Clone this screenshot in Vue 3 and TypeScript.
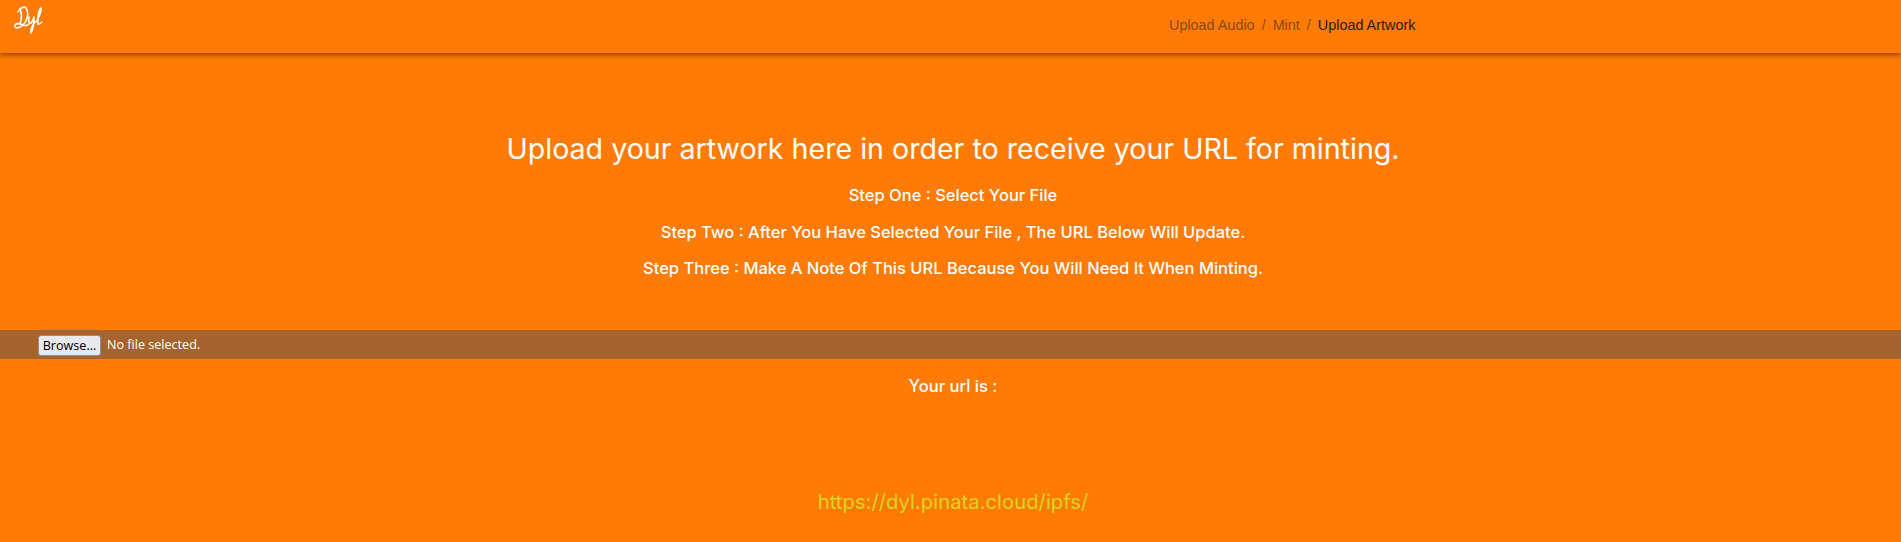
<script setup lang="ts">
const crumbs: string[] = ['Upload Audio', 'Mint']
const steps: string[] = [
  'Step One : Select Your File',
  'Step Two : After You Have Selected Your File , The URL Below Will Update.',
  'Step Three : Make A Note Of This URL Because You Will Need It When Minting.',
]
</script>

<template>
  <div class="page">
    <header class="nav">
      <svg class="logo" viewBox="0 0 30 30" fill="none" stroke="#fff" stroke-width="1.6" stroke-linecap="round" stroke-linejoin="round">
        <path d="M4 6C6 2 10 0 12 2C15 6 14 14 9 19C6 22 1 23 0.8 20C1 17 6 17 9 19C11 20 13 20 15 18" />
        <path d="M6 3C8 7 8 12 6 18" />
        <path d="M15 11C14 15 15 18 17 17C19 15 19 13 20 11C20 16 19 23 17 27C16 24 18 20 21 16" />
        <path d="M22 16C25 12 28 3 27 2C25 3 23 12 24 18C25 19 27 17 28 16" />
      </svg>
      <nav class="crumbs">
        <template v-for="c in crumbs" :key="c">
          <a class="crumb">{{ c }}</a>
          <span class="sep">/</span>
        </template>
        <span class="current">Upload Artwork</span>
      </nav>
    </header>
    <section class="intro">
      <h1 class="title">Upload your artwork here in order to receive your URL for minting.</h1>
      <p v-for="s in steps" :key="s" class="step">{{ s }}</p>
    </section>
    <div class="strip">
      <button class="browse" type="button">Browse...</button>
      <span class="nofile">No file selected.</span>
    </div>
    <p class="your">Your url is :</p>
    <p class="url">https://dyl.pinata.cloud/ipfs/</p>
  </div>
</template>

<style>
html, body { margin: 0; background: #ff7b06; }
</style>

<style scoped>
.page {
  height: 542px;
  overflow: hidden;
  background: #ff7b06;
  color: #fff;
  font-family: Inter, "Noto Sans", sans-serif;
  text-align: center;
}
.nav {
  height: 53px;
  display: flex;
  box-shadow: 0 2px 5px rgba(90, 40, 0, 0.65);
  position: relative;
}
.logo {
  width: 30px;
  height: 30px;
  margin: 6px 0 0 14px;
}
.crumbs {
  display: flex;
  align-items: center;
  margin-left: 1125px;
  height: 50px;
  font: 14.4px "Liberation Sans", Arial, sans-serif;
}
.crumb { color: #8a4a10; }
.sep { color: #8a4a10; padding: 0 7px; }
.current { color: #2a1a0c; }
.intro { padding: 79px 0 0 5px; height: 198px; }
.title {
  margin: 0 0 19px;
  font-size: 28.6px;
  font-weight: 400;
  line-height: 34px;
}
.step {
  margin: 0 0 16px;
  font-size: 16.5px;
  font-weight: 500;
  line-height: 20.5px;
}
.strip {
  height: 29px;
  background: #a5642e;
  display: flex;
  align-items: center;
  padding-left: 38px;
}
.browse {
  width: 63px;
  height: 21px;
  margin-top: 1px;
  padding: 0;
  border: 1px solid #8f8f9d;
  border-radius: 3px;
  background: #e9e9ed;
  color: #000;
  font: 12.6px "Open Sans", sans-serif;
}
.nofile { margin-left: 6px; font: 12.6px "Open Sans", sans-serif; }
.your {
  margin: 17px 0 0;
  padding-left: 5px;
  font-size: 16.6px;
  font-weight: 500;
  line-height: 20px;
}
.url {
  margin: 94px 0 0;
  padding-left: 5px;
  font-size: 20.3px;
  line-height: 24px;
  color: #d8d420;
}
</style>
